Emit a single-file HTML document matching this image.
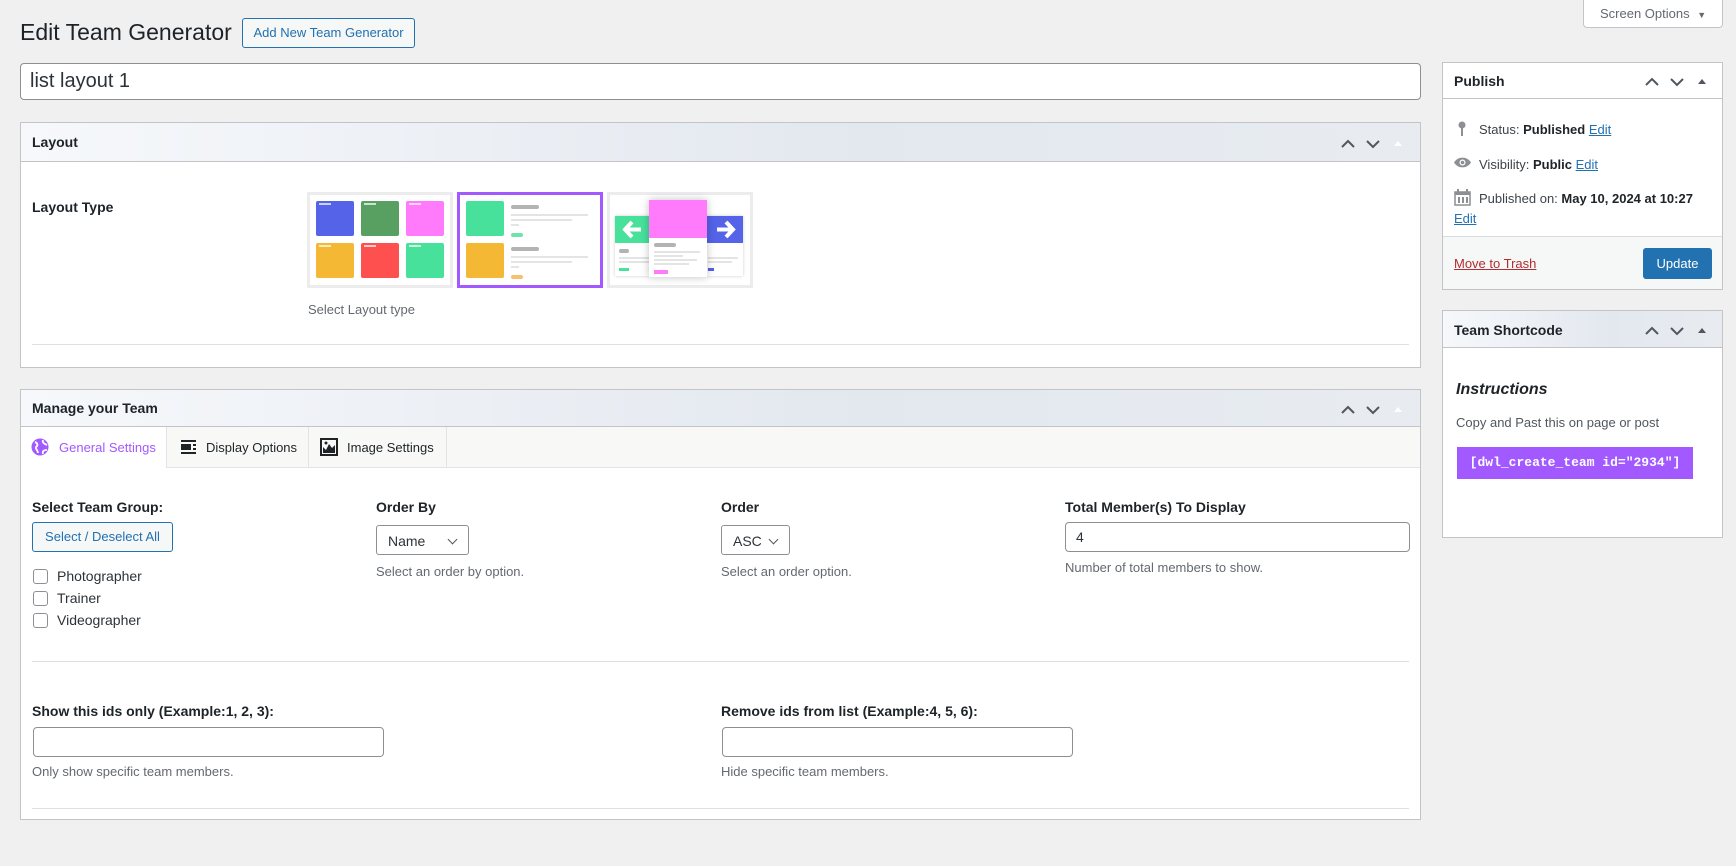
<!DOCTYPE html>
<html><head><meta charset="utf-8"><style>
*{box-sizing:border-box;margin:0;padding:0}
body{width:1736px;height:866px;background:#f0f0f1;font-family:"Liberation Sans",sans-serif;font-size:14px;color:#3c434a;position:relative;overflow:hidden}
.a{position:absolute}
.box{position:absolute;background:#fff;border:1px solid #c3c4c7}
.hd{position:absolute;left:0;right:0;top:0;background:linear-gradient(90deg,#f6f8fb,#e3e8ef 60%,#e8ecf1);border-bottom:1px solid #c3c4c7}
.hd b{position:absolute;left:11px;font-size:14px;color:#1d2327}
.hdw{background:#fff}
.ctl{position:absolute;right:10px;width:70px;height:14px}
b{font-weight:bold}
.lbl{position:absolute;font-weight:bold;color:#1d2327;font-size:14px}
.help{position:absolute;color:#646970;font-size:13px}
.inp{position:absolute;border:1px solid #8c8f94;border-radius:4px;background:#fff}
.sel{position:absolute;border:1px solid #8c8f94;border-radius:3px;background:#fff;font-size:14px;color:#2c3338;padding:7px 0 0 11px}
.sel:after{content:"";position:absolute;right:12px;top:10px;width:6px;height:6px;border-right:1.6px solid #50575e;border-bottom:1.6px solid #50575e;transform:rotate(45deg)}
.cb{position:absolute;width:15px;height:15px;border:1px solid #8c8f94;border-radius:3px;background:#fff}
a{color:#2271b1;text-decoration:underline}
.t{position:absolute;border-radius:2px}
.t:before{content:"";position:absolute;left:3px;top:2px;width:12px;height:2px;background:rgba(255,255,255,.7)}
.ln{position:absolute;height:2px;background:#e4e4e4}
.gl{position:absolute;height:4px;background:#b3b3b3;border-radius:2px}
</style></head><body>

<div class="a" style="left:20px;top:19px;font-size:23px;color:#1d2327">Edit Team Generator</div>
<div class="a" style="left:242px;top:18px;width:173px;height:30px;border:1px solid #2271b1;border-radius:3px;background:#f6f7f7;color:#2271b1;font-size:13px;text-align:center;line-height:28px">Add New Team Generator</div>

<div class="a" style="left:1583px;top:-1px;width:140px;height:29px;border:1px solid #c3c4c7;border-top:0;border-radius:0 0 4px 4px;background:#fff;color:#646970;font-size:13px;padding:7px 0 0 16px">Screen Options <span style="font-size:9px;margin-left:4px">▼</span></div>

<div class="inp" style="left:20px;top:63px;width:1401px;height:37px;font-size:20px;color:#2c3338;padding:6px 0 0 9px">list layout 1</div>

<!-- Layout box -->
<div class="box" style="left:20px;top:122px;width:1401px;height:246px">
  <div class="hd" style="height:39px"><b style="top:11px">Layout</b>
    <svg class="ctl" style="top:13px" viewBox="0 0 70 14"><path d="M2 11 L8 5 L14 11" stroke="#50575e" stroke-width="2" fill="none"/><path d="M27 5 L33 11 L39 5" stroke="#50575e" stroke-width="2" fill="none"/><path d="M54 10 L58 5 L62 10Z" fill="#fff"/></svg>
  </div>
  <div class="lbl" style="left:11px;top:76px">Layout Type</div>
  <div class="help" style="left:287px;top:179px">Select Layout type</div>
  <div class="a" style="left:11px;right:11px;top:221px;height:1px;background:#e0e0e0"></div>
</div>

<!-- thumbnails -->
<div class="a" style="left:307px;top:192px;width:146px;height:96px;border:3px solid #ececec;background:#fff">
  <div class="t" style="left:6px;top:6px;width:38px;height:35px;background:#5563e8"></div>
  <div class="t" style="left:51px;top:6px;width:38px;height:35px;background:#589f62"></div>
  <div class="t" style="left:96px;top:6px;width:38px;height:35px;background:#ff7bfb"></div>
  <div class="t" style="left:6px;top:48px;width:38px;height:35px;background:#f4b835"></div>
  <div class="t" style="left:51px;top:48px;width:38px;height:35px;background:#ff5050"></div>
  <div class="t" style="left:96px;top:48px;width:38px;height:35px;background:#47e19c"></div>
</div>
<div class="a" style="left:457px;top:192px;width:146px;height:96px;border:3px solid #a259ff;background:#fff">
  <div class="a" style="left:6px;top:6px;width:38px;height:35px;background:#47e19c;border-radius:2px"></div>
  <div class="a" style="left:6px;top:48px;width:38px;height:35px;background:#f4b835;border-radius:2px"></div>
  <div class="gl" style="left:51px;top:10px;width:28px"></div>
  <div class="ln" style="left:51px;top:19px;width:77px"></div><div class="ln" style="left:51px;top:24px;width:61px"></div><div class="ln" style="left:51px;top:29px;width:8px"></div>
  <div class="a" style="left:51px;top:38px;width:12px;height:4px;background:#6fe3ac;border-radius:2px"></div>
  <div class="gl" style="left:51px;top:52px;width:28px"></div>
  <div class="ln" style="left:51px;top:61px;width:77px"></div><div class="ln" style="left:51px;top:66px;width:61px"></div><div class="ln" style="left:51px;top:71px;width:8px"></div>
  <div class="a" style="left:51px;top:80px;width:12px;height:4px;background:#f7c070;border-radius:2px"></div>
</div>
<div class="a" style="left:607px;top:192px;width:146px;height:96px;border:3px solid #ececec;background:#fff">
  <div class="a" style="left:5px;top:21px;width:36px;height:60px;background:#fff;box-shadow:0 0 3px #ccc">
    <svg class="a" style="left:0;top:0" width="36" height="27"><rect width="36" height="27" fill="#47e19c"/><path d="M26 13.5 H10 M17 6 L10 13.5 L17 21" stroke="#fff" stroke-width="4" fill="none"/></svg>
    <div class="gl" style="left:4px;top:33px;width:10px"></div><div class="ln" style="left:4px;top:41px;width:30px"></div><div class="ln" style="left:4px;top:45px;width:30px"></div>
    <div class="a" style="left:4px;top:52px;width:10px;height:3px;background:#47e19c"></div>
  </div>
  <div class="a" style="left:95px;top:21px;width:38px;height:60px;background:#fff;box-shadow:0 0 3px #ccc">
    <svg class="a" style="left:0;top:0" width="38" height="27"><rect width="38" height="27" fill="#5563e8"/><path d="M12 13.5 H28 M21 6 L28 13.5 L21 21" stroke="#fff" stroke-width="4" fill="none"/></svg>
    <div class="ln" style="left:3px;top:41px;width:30px"></div><div class="ln" style="left:3px;top:45px;width:24px"></div>
    <div class="a" style="left:3px;top:52px;width:6px;height:3px;background:#5563e8"></div>
  </div>
  <div class="a" style="left:39px;top:5px;width:58px;height:77px;background:#fff;box-shadow:0 0 8px rgba(0,0,0,.25)">
    <div class="a" style="left:0;top:0;width:58px;height:38px;background:#ff7bfb"></div>
    <div class="gl" style="left:5px;top:43px;width:22px"></div><div class="ln" style="left:5px;top:51px;width:46px"></div><div class="ln" style="left:5px;top:55px;width:29px"></div><div class="ln" style="left:5px;top:59px;width:43px"></div><div class="ln" style="left:5px;top:63px;width:35px"></div>
    <div class="a" style="left:5px;top:70px;width:14px;height:4px;background:#ff7bfb"></div>
  </div>
</div>

<!-- Manage box -->
<div class="box" style="left:20px;top:389px;width:1401px;height:431px">
  <div class="hd" style="height:37px"><b style="top:10px">Manage your Team</b>
    <svg class="ctl" style="top:12px" viewBox="0 0 70 14"><path d="M2 11 L8 5 L14 11" stroke="#50575e" stroke-width="2" fill="none"/><path d="M27 5 L33 11 L39 5" stroke="#50575e" stroke-width="2" fill="none"/><path d="M54 10 L58 5 L62 10Z" fill="#fff"/></svg>
  </div>
  <div class="a" style="left:0;right:0;top:37px;height:41px;background:#f8f8f7;border-bottom:1px solid #e4e4e4"></div>
  <div class="a" style="left:0;top:37px;width:146px;height:41px;background:#fff;border-right:1px solid #e4e4e4"></div>
  <div class="a" style="left:146px;top:37px;width:142px;height:41px;border-right:1px solid #e4e4e4"></div>
  <div class="a" style="left:288px;top:37px;width:138px;height:41px;border-right:1px solid #e4e4e4"></div>
  <svg class="a" style="left:10px;top:48px" width="18" height="18" viewBox="0 0 18 18"><circle cx="9" cy="9" r="8.5" fill="#a259ff"/><path d="M4 4 C7 5 7 8 5 9 C4 11 7 12 7 15 M12 2 C11 5 14 6 16 7 M12 16 C11 13 13 12 16 12" stroke="#fff" stroke-width="1.8" fill="none"/></svg>
  <div class="a" style="left:38px;top:50px;color:#a259ff;font-size:13px">General Settings</div>
  <svg class="a" style="left:160px;top:50px" width="16" height="14" viewBox="0 0 16 14"><rect x="0" y="0" width="15" height="2" fill="#1d2327"/><rect x="0" y="4" width="10" height="6" fill="#1d2327"/><rect x="12" y="4" width="3" height="2" fill="#1d2327"/><rect x="12" y="8" width="3" height="2" fill="#1d2327"/><rect x="0" y="12" width="15" height="2" fill="#1d2327"/></svg>
  <div class="a" style="left:185px;top:50px;color:#1d2327;font-size:13px">Display Options</div>
  <svg class="a" style="left:299px;top:48px" width="18" height="18" viewBox="0 0 18 18"><rect x="1" y="1" width="16" height="16" fill="none" stroke="#1d2327" stroke-width="2"/><path d="M3 15 L3 9 L6 12 L9 6 L12 10 L15 7 L15 15Z" fill="#1d2327"/><circle cx="6" cy="5" r="1.5" fill="#1d2327"/></svg>
  <div class="a" style="left:326px;top:50px;color:#1d2327;font-size:13px">Image Settings</div>

  <div class="lbl" style="left:11px;top:109px">Select Team Group:</div>
  <div class="a" style="left:11px;top:132px;width:141px;height:30px;border:1px solid #2271b1;border-radius:3px;background:#f6f7f7;color:#2271b1;font-size:13px;text-align:center;line-height:28px">Select / Deselect All</div>
  <div class="cb" style="left:12px;top:179px"></div><div class="a" style="left:36px;top:178px;color:#2c3338">Photographer</div>
  <div class="cb" style="left:12px;top:201px"></div><div class="a" style="left:36px;top:200px;color:#2c3338">Trainer</div>
  <div class="cb" style="left:12px;top:223px"></div><div class="a" style="left:36px;top:222px;color:#2c3338">Videographer</div>

  <div class="lbl" style="left:355px;top:109px">Order By</div>
  <div class="sel" style="left:355px;top:135px;width:93px;height:30px">Name</div>
  <div class="help" style="left:355px;top:174px">Select an order by option.</div>

  <div class="lbl" style="left:700px;top:109px">Order</div>
  <div class="sel" style="left:700px;top:135px;width:69px;height:30px">ASC</div>
  <div class="help" style="left:700px;top:174px">Select an order option.</div>

  <div class="lbl" style="left:1044px;top:109px">Total Member(s) To Display</div>
  <div class="inp" style="left:1044px;top:132px;width:345px;height:30px;color:#2c3338;padding:6px 0 0 10px">4</div>
  <div class="help" style="left:1044px;top:170px">Number of total members to show.</div>

  <div class="a" style="left:11px;right:11px;top:271px;height:1px;background:#e0e0e0"></div>
  <div class="lbl" style="left:11px;top:313px">Show this ids only (Example:1, 2, 3):</div>
  <div class="inp" style="left:12px;top:337px;width:351px;height:30px"></div>
  <div class="help" style="left:11px;top:374px">Only show specific team members.</div>
  <div class="lbl" style="left:700px;top:313px">Remove ids from list (Example:4, 5, 6):</div>
  <div class="inp" style="left:701px;top:337px;width:351px;height:30px"></div>
  <div class="help" style="left:700px;top:374px">Hide specific team members.</div>
  <div class="a" style="left:11px;right:11px;top:418px;height:1px;background:#e0e0e0"></div>
</div>

<!-- Publish -->
<div class="box" style="left:1442px;top:62px;width:281px;height:228px">
  <div class="hd hdw" style="height:36px"><b style="top:10px">Publish</b>
    <svg class="ctl" style="top:11px;right:8px" viewBox="0 0 70 14"><path d="M2 11 L8 5 L14 11" stroke="#50575e" stroke-width="2" fill="none"/><path d="M27 5 L33 11 L39 5" stroke="#50575e" stroke-width="2" fill="none"/><path d="M54 10 L58 5 L62 10Z" fill="#50575e"/></svg>
  </div>
  <svg class="a" style="left:14px;top:58px" width="10" height="16" viewBox="0 0 10 16"><circle cx="5" cy="4" r="3.5" fill="#8c8f94"/><rect x="4" y="6" width="2" height="9" fill="#8c8f94"/></svg>
  <div class="a" style="left:36px;top:59px;font-size:13px">Status: <b style="color:#1d2327">Published</b> <a>Edit</a></div>
  <svg class="a" style="left:10px;top:93px" width="19" height="13" viewBox="0 0 19 13"><path d="M1 6.5 C5 0 14 0 18 6.5 C14 13 5 13 1 6.5Z" fill="#8c8f94"/><circle cx="9.5" cy="6.5" r="3" fill="#fff"/><circle cx="9.5" cy="6.5" r="1.8" fill="#8c8f94"/></svg>
  <div class="a" style="left:36px;top:94px;font-size:13px">Visibility: <b style="color:#1d2327">Public</b> <a>Edit</a></div>
  <svg class="a" style="left:11px;top:126px" width="17" height="17" viewBox="0 0 17 17"><rect x="1" y="3" width="15" height="13" fill="none" stroke="#8c8f94" stroke-width="1.5"/><rect x="1" y="3" width="15" height="3" fill="#8c8f94"/><rect x="3" y="0" width="2" height="4" fill="#8c8f94"/><rect x="12" y="0" width="2" height="4" fill="#8c8f94"/><rect x="4" y="8" width="2" height="6" fill="#8c8f94"/><rect x="8" y="8" width="2" height="6" fill="#8c8f94"/><rect x="12" y="8" width="2" height="6" fill="#8c8f94"/></svg>
  <div class="a" style="left:36px;top:128px;font-size:13px">Published on: <b style="color:#1d2327">May 10, 2024 at 10:27</b></div>
  <div class="a" style="left:11px;top:148px;font-size:13px"><a>Edit</a></div>
  <div class="a" style="left:0;right:0;top:173px;bottom:0;background:#f6f7f7;border-top:1px solid #dcdcde"></div>
  <div class="a" style="left:11px;top:193px;font-size:13px"><a style="color:#b32d2e">Move to Trash</a></div>
  <div class="a" style="left:200px;top:185px;width:69px;height:31px;background:#2271b1;border-radius:3px;color:#fff;font-size:13px;text-align:center;line-height:31px">Update</div>
</div>

<!-- Shortcode -->
<div class="box" style="left:1442px;top:310px;width:281px;height:228px">
  <div class="hd" style="height:37px"><b style="top:11px">Team Shortcode</b>
    <svg class="ctl" style="top:12px;right:8px" viewBox="0 0 70 14"><path d="M2 11 L8 5 L14 11" stroke="#50575e" stroke-width="2" fill="none"/><path d="M27 5 L33 11 L39 5" stroke="#50575e" stroke-width="2" fill="none"/><path d="M54 10 L58 5 L62 10Z" fill="#50575e"/></svg>
  </div>
  <div class="a" style="left:13px;top:70px;font-size:16px;font-weight:bold;font-style:italic;color:#1d2327">Instructions</div>
  <div class="a" style="left:13px;top:104px;font-size:13px;color:#50575e">Copy and Past this on page or post</div>
  <div class="a" style="left:14px;top:136px;width:236px;height:32px;background:#a259ff;color:#fff;font-family:'Liberation Mono',monospace;font-weight:bold;font-size:13px;text-align:center;line-height:32px">[dwl_create_team id="2934"]</div>
</div>

</body></html>
